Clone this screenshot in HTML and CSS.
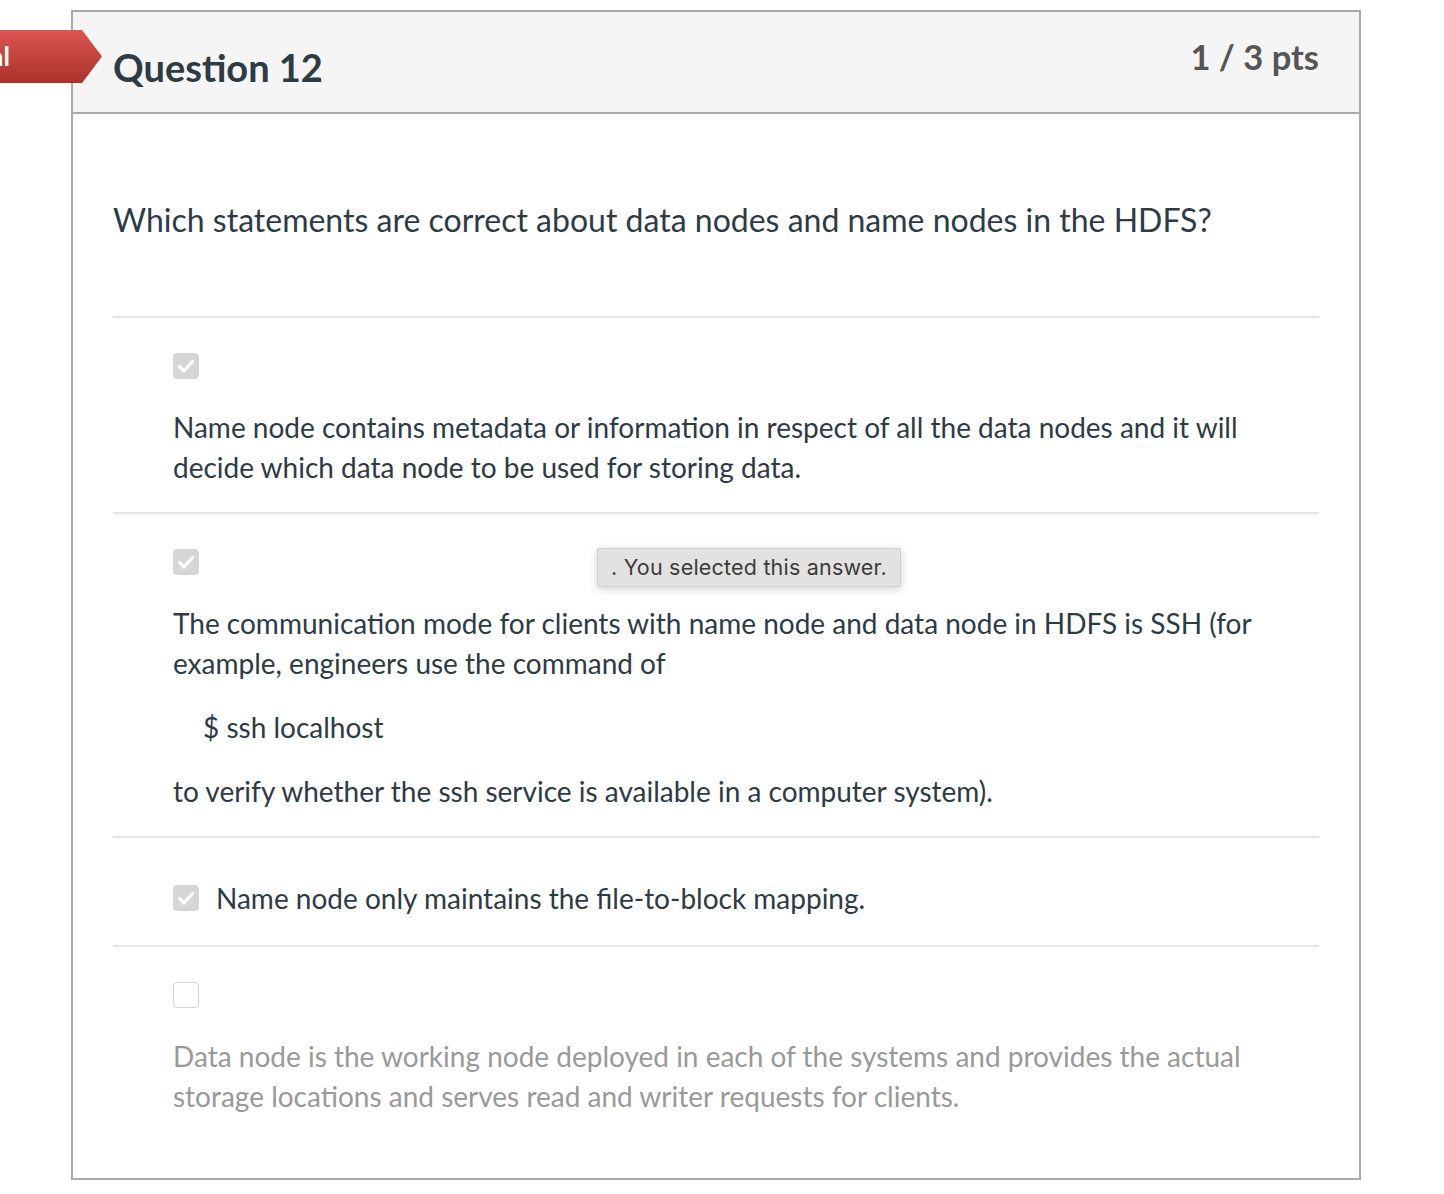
FILE: index.html
```html
<!DOCTYPE html>
<html>
<head>
<meta charset="utf-8">
<link rel="stylesheet" href="styles.css">
</head>
<body>
<div class="flag"><span>Partial</span></div>
<div class="card">
  <div class="header">
    <h2 class="title">Question 12</h2>
    <div class="pts">1 / 3 pts</div>
  </div>
  <div class="body">
    <p class="qtext">Which statements are correct about data nodes and name nodes in the HDFS?</p>
    <div class="answers">
      <div class="answer stacked a1">
        <span class="cb checked"><svg viewBox="0 0 26 26" width="26" height="26"><path d="M6.5 13.5 L11 18 L19.5 8.5" fill="none" stroke="#fff" stroke-width="3.2" stroke-linecap="round" stroke-linejoin="round"/></svg></span>
        <div class="label">
          <p>Name node contains metadata or information in respect of all the data nodes and it will decide which data node to be used for storing data.</p>
        </div>
      </div>
      <div class="answer stacked a2">
        <span class="cb checked"><svg viewBox="0 0 26 26" width="26" height="26"><path d="M6.5 13.5 L11 18 L19.5 8.5" fill="none" stroke="#fff" stroke-width="3.2" stroke-linecap="round" stroke-linejoin="round"/></svg></span>
        <div class="tooltip">. You selected this answer.</div>
        <div class="label">
          <p>The communication mode for clients with name node and data node in HDFS is SSH (for example, engineers use the command of</p>
          <p class="code">$ ssh localhost</p>
          <p>to verify whether the ssh service is available in a computer system).</p>
        </div>
      </div>
      <div class="answer inline a3">
        <span class="cb checked"><svg viewBox="0 0 26 26" width="26" height="26"><path d="M6.5 13.5 L11 18 L19.5 8.5" fill="none" stroke="#fff" stroke-width="3.2" stroke-linecap="round" stroke-linejoin="round"/></svg></span>
        <div class="label">Name node only maintains the file-to-block mapping.</div>
      </div>
      <div class="answer stacked a4 muted">
        <span class="cb"></span>
        <div class="label">
          <p>Data node is the working node deployed in each of the systems and provides the actual storage locations and serves read and writer requests for clients.</p>
        </div>
      </div>
    </div>
  </div>
</div>
</body>
</html>
```

FILE: styles.css
```css
html, body {
  margin: 0;
  padding: 0;
  background: #fff;
}
body {
  font-family: "Lato", "Open Sans", sans-serif;
  color: #2d3b45;
  position: relative;
}
.flag {
  position: absolute;
  left: -80px;
  top: 30px;
  width: 182px;
  height: 53px;
  background: linear-gradient(#dc5650, #a9322a);
  clip-path: polygon(0 0, 162px 0, 182px 50%, 162px 100%, 0 100%);
  color: #fff;
  font-weight: 700;
  font-size: 26px;
  line-height: 53px;
  z-index: 2;
}
.flag span {
  display: block;
  width: 90px;
  text-align: right;
}
.card {
  margin: 10px 0 0 71px;
  width: 1286px;
  border: 2px solid #aaa;
  background: #fff;
}
.header {
  height: 100px;
  background: #f5f5f5;
  border-bottom: 2px solid #aaa;
  padding: 0 40px 0 40px;
  display: flex;
  justify-content: space-between;
  align-items: flex-start;
}
.title {
  margin: 0;
  padding-top: 32px;
  font-size: 38px;
  line-height: 46px;
  font-weight: 700;
  color: #2d3b45;
}
.pts {
  padding-top: 25px;
  font-size: 34.5px;
  line-height: 40px;
  font-weight: 700;
  color: #555;
}
.body {
  padding: 0 40px 62px 40px;
}
.qtext {
  margin: 0;
  padding: 82px 0 72px 0;
  font-size: 32px;
  line-height: 48px;
}
.answer {
  border-top: 2px solid #e6e6e6;
  padding-left: 60px;
  position: relative;
}
.answer p {
  margin: 0;
  font-size: 28px;
  line-height: 40px;
}
.label {
  font-size: 28px;
  line-height: 40px;
}
.stacked {
  padding-top: 35px;
  padding-bottom: 25px;
}
.stacked .label {
  margin-top: 28px;
}
.a2 .label p + p {
  margin-top: 24px;
}
.code {
  padding-left: 30px;
}
.inline {
  display: flex;
  align-items: center;
  gap: 17px;
  padding-top: 40px;
  padding-bottom: 27px;
}
.a4 {
  padding-bottom: 0;
}
.muted .label {
  color: #999;
}
.cb {
  display: block;
  flex: none;
  width: 26px;
  height: 26px;
  box-sizing: border-box;
  border-radius: 4px;
  background: #fff;
  border: 1px solid #d6d6d6;
}
.cb.checked {
  background: #d6d6d6;
  border: none;
}
.cb svg {
  display: block;
}
.tooltip {
  position: absolute;
  left: 484px;
  top: 34px;
  width: 304px;
  height: 39px;
  box-sizing: border-box;
  background: #e3e2e0;
  border: 1px solid #cfcfcf;
  border-radius: 2px;
  box-shadow: 0 2px 8px rgba(0,0,0,0.18);
  font-family: "Inter", "Liberation Sans", sans-serif;
  font-size: 21.5px;
  line-height: 37px;
  color: #3b3b3b;
  text-align: center;
  letter-spacing: 0.2px;
}
```
